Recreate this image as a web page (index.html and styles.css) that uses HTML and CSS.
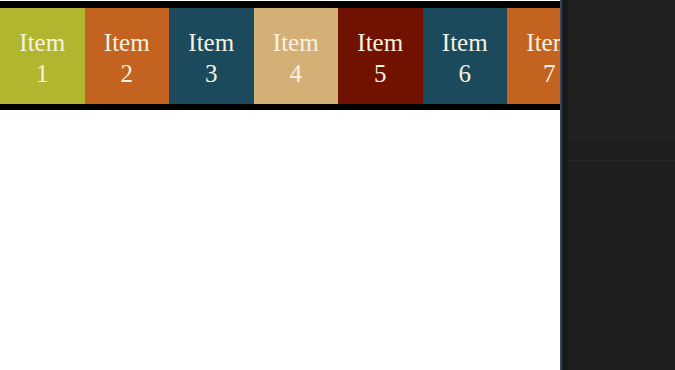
FILE: index.html
```html
<!DOCTYPE html>
<html>
<head>
<meta charset="utf-8">
<link rel="stylesheet" href="styles.css">
</head>
<body>
<div class="page">
  <main class="main">
    <nav class="menu">
      <div class="item c1">Item<br>1</div>
      <div class="item c2">Item<br>2</div>
      <div class="item c3">Item<br>3</div>
      <div class="item c4">Item<br>4</div>
      <div class="item c5">Item<br>5</div>
      <div class="item c3">Item<br>6</div>
      <div class="item c2">Item<br>7</div>
    </nav>
  </main>
  <aside class="panel">
    <div class="strip"></div>
    <div class="panel-body">
      <div class="panel-top"></div>
      <div class="panel-mid"></div>
      <div class="panel-rest"></div>
    </div>
  </aside>
</div>
</body>
</html>
```
FILE: styles.css
```css
html, body {
  margin: 0;
  padding: 0;
  height: 100%;
  background: #ffffff;
}
.page {
  display: flex;
  height: 370px;
  width: 675px;
  overflow: hidden;
}
.main {
  width: 560px;
  flex: none;
  overflow: hidden;
  padding-top: 1px;
  background: #ffffff;
}
.menu {
  display: flex;
  background: #000000;
  padding: 7px 0 6px;
  overflow: hidden;
}
.item {
  flex: none;
  width: 84.5px;
  height: 96px;
  box-sizing: border-box;
  padding-top: 19px;
  text-align: center;
  font-family: "Times New Roman", "Liberation Serif", "DejaVu Serif", serif;
  font-size: 25px;
  line-height: 31px;
  color: #f7f3e3;
}
.c1 { background: #b2b52e; }
.c2 { background: #c4631f; }
.c3 { background: #1b4a5d; }
.c4 { background: #d4b077; }
.c5 { background: #711100; }
.panel {
  flex: 1;
  display: flex;
  border-left: 2px solid #35465a;
  background: #1f1f1f;
}
.strip {
  width: 6px;
  flex: none;
  background: #1a1b1d;
}
.panel-body {
  flex: 1;
  display: flex;
  flex-direction: column;
}
.panel-top {
  height: 137px;
  border-bottom: 1px solid #2a2a2a;
  background: #202020;
}
.panel-mid {
  height: 22px;
  border-bottom: 1px solid #2a2a2a;
}
.panel-rest {
  flex: 1;
}
```
